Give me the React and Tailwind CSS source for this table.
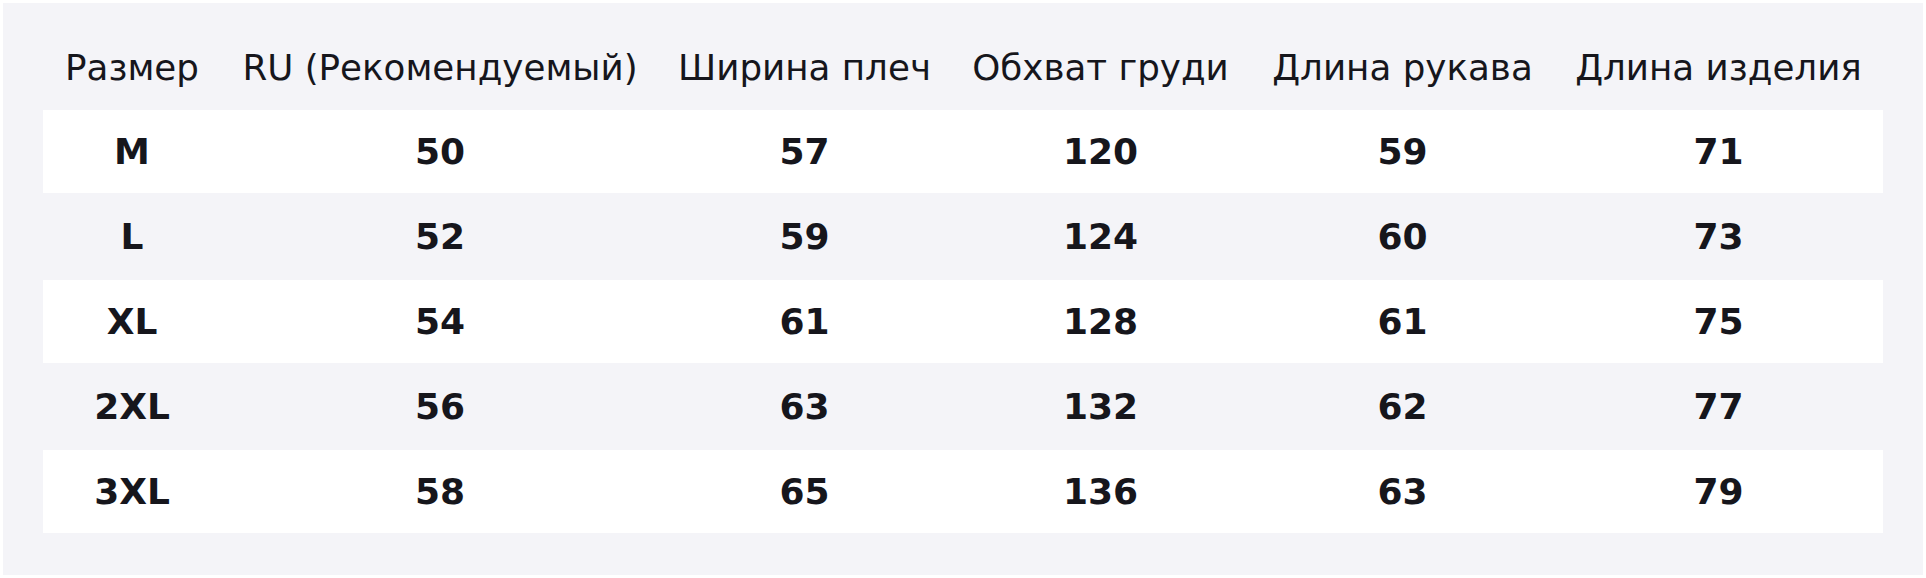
import React from "react";

const headers = [
  "Размер",
  "RU (Рекомендуемый)",
  "Ширина плеч",
  "Обхват груди",
  "Длина рукава",
  "Длина изделия",
];

const rows = [
  ["M", "50", "57", "120", "59", "71"],
  ["L", "52", "59", "124", "60", "73"],
  ["XL", "54", "61", "128", "61", "75"],
  ["2XL", "56", "63", "132", "62", "77"],
  ["3XL", "58", "65", "136", "63", "79"],
];

const cols = "grid grid-cols-[178px_438px_291px_301px_303px_329px]";

export default function App() {
  return (
    <div className="w-[1926px] h-[578px] bg-white p-[3px] font-['DejaVu_Sans',sans-serif] text-[#16161c]">
      <div className="h-[572px] bg-[#f4f4f8] px-[40px] pt-[44px]">
        <div className={`${cols} text-[35.7px] leading-[42px] pb-[21px]`}>
          {headers.map((h) => (
            <div key={h} className="text-center whitespace-nowrap">
              {h}
            </div>
          ))}
        </div>
        <div className="flex flex-col gap-[2px]">
          {rows.map((r, i) => (
            <div
              key={r[0]}
              className={`${cols} h-[83px] items-center text-[36px] leading-[42px] font-bold ${
                i % 2 === 0 ? "bg-white" : "bg-transparent"
              }`}
            >
              {r.map((c, j) => (
                <div key={j} className="text-center">
                  {c}
                </div>
              ))}
            </div>
          ))}
        </div>
      </div>
    </div>
  );
}
